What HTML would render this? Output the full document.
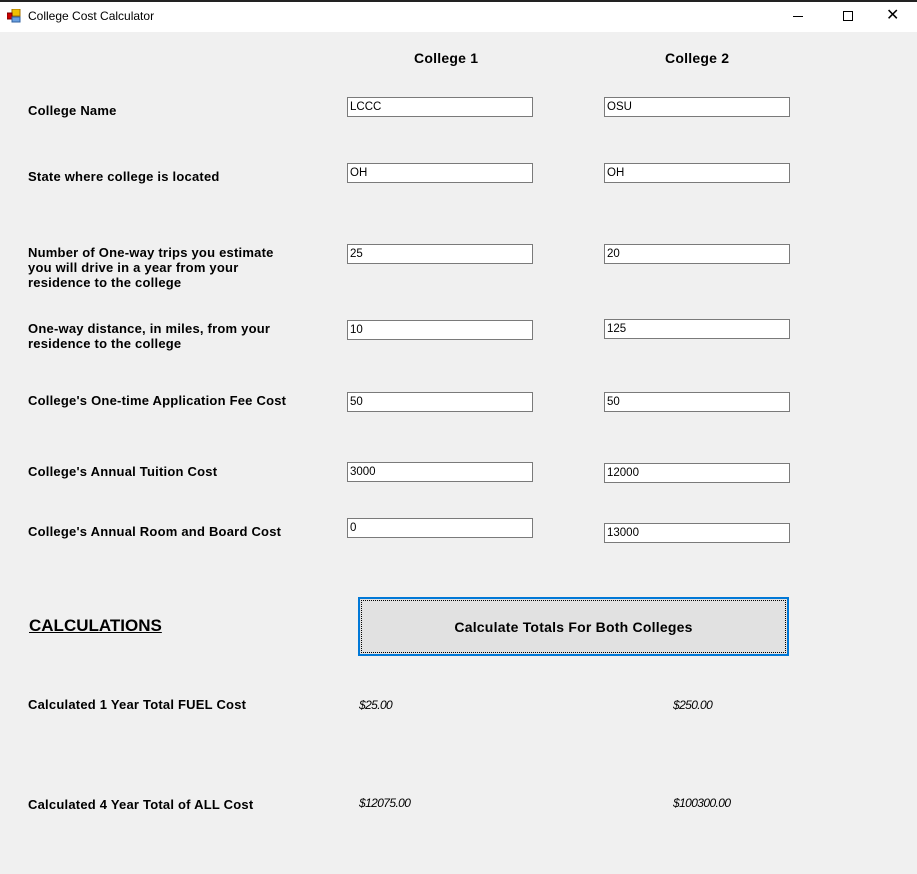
<!DOCTYPE html><html><head><style>
body{margin:0;width:917px;height:874px;background:#f0f0f0;position:relative;overflow:hidden;font-family:"Liberation Sans",Arial,sans-serif}
.t{position:absolute;font-weight:bold;font-size:13px;color:#000;line-height:15px;letter-spacing:0.22px}
.i{position:absolute;width:182px;height:18px;border:1px solid #7a7a7a;background:#fff;font-size:11.5px;line-height:18px;padding-left:2px;box-sizing:content-box}
.v{position:absolute;font-style:italic;font-size:12px;letter-spacing:-0.6px}
</style></head><body>
<div style="position:absolute;left:0;top:0;width:917px;height:32px;background:#fff"></div>
<div style="position:absolute;left:0;top:0;width:917px;height:2px;background:#222"></div>
<svg style="position:absolute;left:7px;top:9px" width="14" height="14"><rect x="5" y="0" width="8" height="7" fill="#f0c000" stroke="#a07000"/><rect x="0" y="4" width="5" height="6" fill="#c00" stroke="#700"/><rect x="5" y="8" width="8" height="5" fill="#6aa0e0" stroke="#3060a0"/></svg>
<div style="position:absolute;left:28px;top:9px;font-size:12px">College Cost Calculator</div>
<div style="position:absolute;left:793px;top:16px;width:10px;height:1px;background:#000"></div>
<div style="position:absolute;left:843px;top:11px;width:8px;height:8px;border:1px solid #000"></div>
<div style="position:absolute;left:886px;top:5px;font-size:16px">✕</div>
<div class="t" style="left:414px;top:51px;font-size:14px">College 1</div>
<div class="t" style="left:665px;top:51px;font-size:14px">College 2</div>
<div class="t" style="left:28px;top:103px">College Name</div>
<div class="t" style="left:28px;top:169px">State where college is located</div>
<div class="t" style="left:28px;top:245px">Number of One-way trips you estimate<br>you will drive in a year from your<br>residence to the college</div>
<div class="t" style="left:28px;top:321px">One-way distance, in miles, from your<br>residence to the college</div>
<div class="t" style="left:28px;top:393px">College's One-time Application Fee Cost</div>
<div class="t" style="left:28px;top:464px">College's Annual Tuition Cost</div>
<div class="t" style="left:28px;top:524px">College's Annual Room and Board Cost</div>
<div class="i" style="left:347px;top:97px">LCCC</div><div class="i" style="left:604px;top:97px">OSU</div>
<div class="i" style="left:347px;top:163px">OH</div><div class="i" style="left:604px;top:163px">OH</div>
<div class="i" style="left:347px;top:244px">25</div><div class="i" style="left:604px;top:244px">20</div>
<div class="i" style="left:347px;top:320px">10</div><div class="i" style="left:604px;top:319px">125</div>
<div class="i" style="left:347px;top:392px">50</div><div class="i" style="left:604px;top:392px">50</div>
<div class="i" style="left:347px;top:462px">3000</div><div class="i" style="left:604px;top:463px">12000</div>
<div class="i" style="left:347px;top:518px">0</div><div class="i" style="left:604px;top:523px">13000</div>
<div class="t" style="left:29px;top:616px;font-size:17px;line-height:20px;text-decoration:underline;letter-spacing:0">CALCULATIONS</div>
<div style="position:absolute;left:358px;top:597px;width:427px;height:55px;border:2px solid #0078d7;background:#e1e1e1"><div style="position:absolute;left:0;top:0;right:0;bottom:0;border:1px dotted #000;margin:1px"></div><div class="t" style="position:absolute;left:0;right:0;top:21px;text-align:center;font-size:14px">Calculate Totals For Both Colleges</div></div>
<div class="t" style="left:28px;top:697px">Calculated 1 Year Total FUEL Cost</div>
<div class="t" style="left:28px;top:797px">Calculated 4 Year Total of ALL Cost</div>
<div class="v" style="left:359px;top:698px">$25.00</div><div class="v" style="left:673px;top:698px">$250.00</div>
<div class="v" style="left:359px;top:796px">$12075.00</div><div class="v" style="left:673px;top:796px">$100300.00</div>
</body></html>
